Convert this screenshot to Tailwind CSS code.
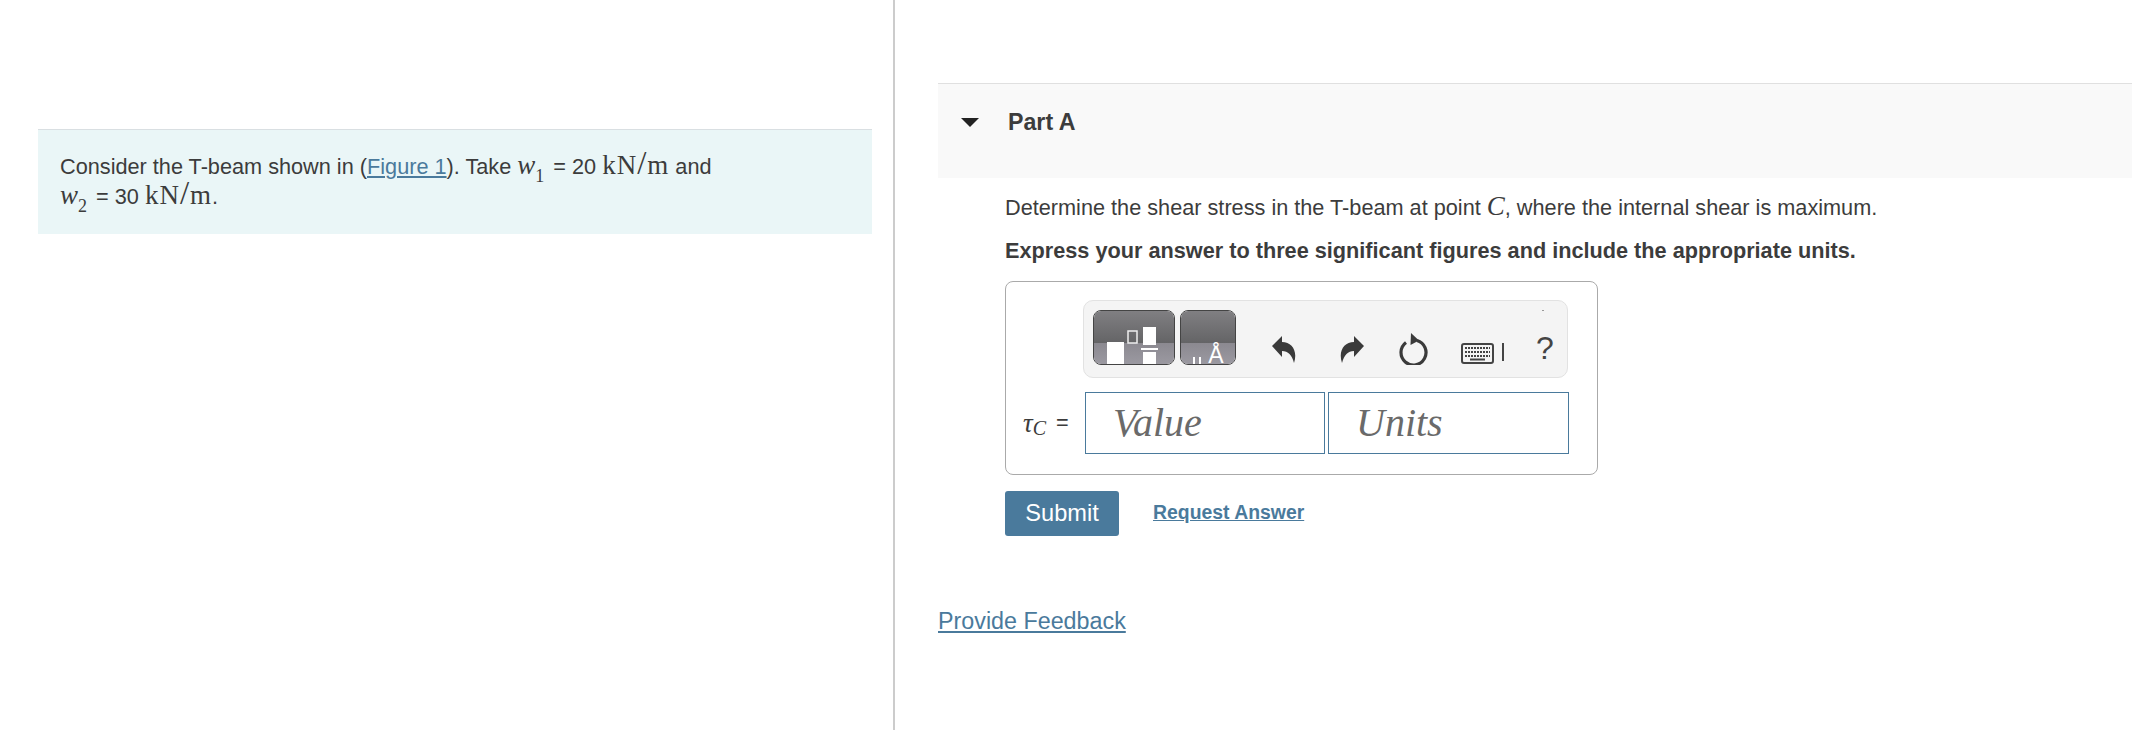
<!DOCTYPE html>
<html lang="en">
  <head>
    <meta charset="UTF-8" />
    <title>Part A</title>
    <script src="https://cdn.jsdelivr.net/npm/@tailwindcss/browser@4"></script>
  </head>
  <body class="bg-white text-[#3c3c3c] font-['Liberation_Sans',sans-serif] text-[21.7px] leading-[30px] overflow-hidden">
    <div class="flex h-[730px]">
      <!-- Left pane -->
      <div class="w-[895px] shrink-0 border-r-2 border-[#ccc] pt-[129px] pl-[38px] pr-[21px]">
        <div class="h-[105px] bg-[#eaf6f7] border-t border-[#d9dfe2] pl-[22px] pt-[17px]">
          <p class="h-[30px]">Consider the T-beam shown in (<a class="text-[#4a7a9c] underline">Figure 1</a>). Take <span class="font-['Liberation_Serif',serif] italic text-[27px] leading-none">w</span><sub class="font-['Liberation_Serif',serif] text-[18px] align-[-3px] leading-none">1</sub><span class="ml-[9px]">= 20</span> <span class="font-['Liberation_Serif',serif] text-[27px] leading-none tracking-[1px]">kN<span class="text-[33px] font-light">/</span>m</span> and</p>
          <p class="h-[30px]"><span class="font-['Liberation_Serif',serif] italic text-[27px] leading-none">w</span><sub class="font-['Liberation_Serif',serif] text-[18px] align-[-3px] leading-none">2</sub><span class="ml-[9px]">= 30</span> <span class="font-['Liberation_Serif',serif] text-[27px] leading-none tracking-[1px]">kN<span class="text-[33px] font-light">/</span>m</span>.</p>
        </div>
      </div>

      <!-- Right pane -->
      <div class="flex-1 min-w-0 pt-[83px] pl-[43px]">
        <div class="h-[95px] bg-[#f9f9f9] border-t border-[#e0e0e0] flex items-start pt-[23px]">
          <svg class="ml-[23px] mt-[11px]" width="18" height="9" viewBox="0 0 18 9"><path d="M0 0H18L9 9Z" fill="#222" /></svg>
          <h2 class="ml-[29px] font-bold text-[23.2px]">Part A</h2>
        </div>

        <div class="pl-[67px]">
          <p class="mt-[15px] h-[30px]">Determine the shear stress in the T-beam at point <span class="font-['Liberation_Serif',serif] italic text-[27px] leading-none">C</span>, where the internal shear is maximum.</p>
          <p class="mt-[13px] font-bold">Express your answer to three significant figures and include the appropriate units.</p>

          <!-- Answer box -->
          <div class="mt-[15px] w-[593px] h-[194px] border border-[#aaa] rounded-[8px] pl-[77px] pt-[18px]">
            <div class="relative w-[485px] h-[78px] bg-[#f4f4f4] border border-[#e2e2e2] rounded-[10px] flex items-start pl-[9px] pt-[9px]">
              <div class="w-[82px] h-[55px] rounded-[8px] overflow-hidden border border-[#444]">
                <svg width="80" height="53" viewBox="0 0 80 53">
                  <defs>
                    <linearGradient id="top1" x1="0" y1="0" x2="0" y2="1"><stop offset="0" stop-color="#807f82" /><stop offset="1" stop-color="#646466" /></linearGradient>
                    <linearGradient id="low1" x1="0" y1="0" x2="0" y2="1"><stop offset="0" stop-color="#8b8990" /><stop offset="1" stop-color="#9b99a1" /></linearGradient>
                  </defs>
                  <rect width="80" height="32" fill="url(#top1)" />
                  <rect y="32" width="80" height="21" fill="url(#low1)" />
                  <rect x="13" y="31" width="17" height="22" fill="#fff" />
                  <rect x="34" y="20" width="9" height="12" fill="none" stroke="#eee" stroke-width="1.5" />
                  <rect x="49" y="16" width="13" height="18" fill="#fff" />
                  <rect x="47" y="37" width="17" height="2" fill="#fff" />
                  <rect x="49" y="41" width="13" height="12" fill="#fff" />
                </svg>
              </div>
              <div class="ml-[5px] w-[56px] h-[55px] rounded-[8px] overflow-hidden border border-[#444]">
                <svg width="54" height="53" viewBox="0 0 54 53">
                  <defs>
                    <linearGradient id="top2" x1="0" y1="0" x2="0" y2="1"><stop offset="0" stop-color="#807f82" /><stop offset="1" stop-color="#646466" /></linearGradient>
                    <linearGradient id="low2" x1="0" y1="0" x2="0" y2="1"><stop offset="0" stop-color="#8b8990" /><stop offset="1" stop-color="#9b99a1" /></linearGradient>
                  </defs>
                  <rect width="54" height="32" fill="url(#top2)" />
                  <rect y="32" width="54" height="21" fill="url(#low2)" />
                  <rect x="12" y="46" width="2" height="7" fill="#fff" />
                  <rect x="18" y="46" width="2" height="7" fill="#fff" />
                  <text x="35" y="52" text-anchor="middle" fill="#fff" font-family="Liberation Sans, sans-serif" font-size="23">Å</text>
                </svg>
              </div>

              <svg class="ml-[36px] mt-[26px]" width="24" height="28" viewBox="0 0 24 28"><path d="M0 10 10 0V6C20 6 26 15 22 27 20 19 16 15 10 15V21Z" fill="#3a3a3a" /></svg>
              <svg class="ml-[44px] mt-[26px]" width="24" height="28" viewBox="0 0 24 28"><path d="M24 10 14 0V6C4 6-2 15 2 27 4 19 8 15 14 15V21Z" fill="#3a3a3a" /></svg>
              <svg class="ml-[34px] mt-[23px]" width="30" height="32" viewBox="0 0 30 32">
                <path d="M8 9.5A12.5 12.5 0 1 0 19 7.5" fill="none" stroke="#3a3a3a" stroke-width="3.2" />
                <path d="M13 0 21 7.5 12.5 12Z" fill="#3a3a3a" />
              </svg>
              <svg class="ml-[33px] mt-[33px]" width="33" height="21" viewBox="0 0 33 21">
                <rect x="1" y="1" width="31" height="19" rx="2" fill="#f4f4f4" stroke="#444" stroke-width="2" />
                <path d="M4 5H29M4 9H29" stroke="#444" stroke-width="2" stroke-dasharray="2 1" />
                <path d="M4 13H29" stroke="#444" stroke-width="2" stroke-dasharray="2 1" />
                <rect x="9" y="15.5" width="15" height="2" fill="#444" />
              </svg>
              <div class="ml-[8px] mt-[33px] w-[2px] h-[18px] bg-[#444]"></div>
              <span class="ml-[32px] mt-[19px] text-[32px] leading-[38px] text-[#444]">?</span>
              <div class="absolute left-[458px] top-[9px] w-[2px] h-[1px] bg-[#999]"></div>
            </div>

            <div class="flex items-start mt-[14px] -ml-[60px]">
              <div class="w-[60px] h-[62px] flex items-center text-[21.7px] whitespace-nowrap"><span class="font-['Liberation_Serif',serif] italic text-[27px]">τ</span><sub class="font-['Liberation_Serif',serif] italic text-[20px] align-[-4px] leading-none">C</sub><span class="ml-[10px]">=</span></div>
              <div class="ml-[2px] w-[240px] h-[62px] border border-[#4a7a9c] flex items-center pl-[27px] font-['Liberation_Serif',serif] italic text-[40px] text-[#6a6a6a]">Value</div>
              <div class="ml-[3px] w-[241px] h-[62px] border border-[#4a7a9c] flex items-center pl-[27px] font-['Liberation_Serif',serif] italic text-[40px] text-[#6a6a6a]">Units</div>
            </div>
          </div>

          <div class="mt-[16px] flex items-start">
            <button class="w-[114px] h-[45px] pb-[2px] bg-[#4a7a9c] rounded-[3px] text-white text-[23.6px]">Submit</button>
            <a class="ml-[34px] mt-[6px] font-bold text-[#4a7a9c] text-[19.4px] underline">Request Answer</a>
          </div>
        </div>

        <a class="block mt-[68px] text-[23.3px] leading-[34px] text-[#4a7a9c] underline">Provide Feedback</a>
      </div>
    </div>
  </body>
</html>
